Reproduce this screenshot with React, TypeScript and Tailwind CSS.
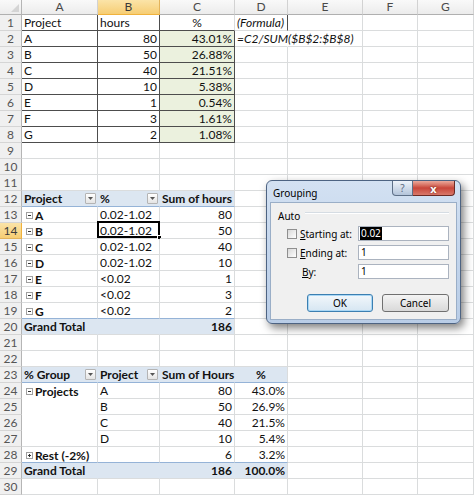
import React from 'react';

type Cell = {
  t?: React.ReactNode;
  a?: 'l' | 'r' | 'c';
  bold?: boolean;
  it?: boolean;
  bg?: string;
  r?: string;
  b?: string;
  extra?: React.ReactNode;
};

const GR = 'border-r-[#dadcdd]';
const GB = 'border-b-[#dadcdd]';
const DR = 'border-r-[#4d4d4d]';
const DB = 'border-b-[#4d4d4d]';
const PB = 'border-b-[#95b3d7]';
const TR = 'border-r-transparent';
const TB = 'border-b-transparent';
const BLUE = 'bg-[#dce6f1]';
const GREEN = 'bg-[#ebf1de]';

function Dropdown() {
  return (
    <span className="absolute right-[1px] top-[2px] w-[11px] h-[11px] border border-[#b4b4b4] rounded-[1px] bg-linear-to-b from-white to-[#e4e4e4] flex items-center justify-center">
      <svg width="5" height="3" viewBox="0 0 5 3">
        <path d="M0 0h5L2.5 3z" fill="#555" />
      </svg>
    </span>
  );
}

function Expander({ plus, label }: { plus?: boolean; label: string }) {
  return (
    <span className="inline-flex items-center">
      <span className="relative inline-block w-[7px] h-[7px] border border-[#a0a0a0] bg-white ml-[2px] mr-[2px]">
        <span className="absolute left-[1px] top-[2px] w-[3px] h-px bg-[#333]" />
        {plus && <span className="absolute left-[2px] top-[1px] w-px h-[3px] bg-[#333]" />}
      </span>
      <span className="font-bold">{label}</span>
    </span>
  );
}

function Selection() {
  return (
    <span className="absolute left-[-1px] top-[-2px] w-[calc(100%+2px)] h-[calc(100%+2px)] border-2 border-black pointer-events-none">
      <span className="absolute right-[-4px] bottom-[-4px] w-[5px] h-[5px] bg-black border border-white" />
    </span>
  );
}

const rows: Cell[][] = Array.from({ length: 30 }, () => Array.from({ length: 7 }, () => ({} as Cell)));
const set = (r: number, c: number, v: Cell) => {
  rows[r - 1][c] = { ...rows[r - 1][c], ...v };
};

// Source table
set(1, 0, { t: 'Project', r: DR, b: DB });
set(1, 1, { t: 'hours', r: DR, b: DB });
set(1, 2, { t: '%', a: 'c', b: DB });
set(1, 3, { t: '(Formula)', it: true, r: DR });
const src: [string, string, string][] = [
  ['A', '80', '43.01%'],
  ['B', '50', '26.88%'],
  ['C', '40', '21.51%'],
  ['D', '10', '5.38%'],
  ['E', '1', '0.54%'],
  ['F', '3', '1.61%'],
  ['G', '2', '1.08%'],
];
src.forEach(([p, h, pct], i) => {
  const r = i + 2;
  set(r, 0, { t: p, r: DR, b: DB });
  set(r, 1, { t: h, a: 'r', r: DR, b: DB });
  set(r, 2, { t: pct, a: 'r', bg: GREEN, r: DR, b: DB });
});
set(2, 3, { t: '=C2/SUM($B$2:$B$8)', it: true, r: TR });

// Pivot 1
set(12, 0, { t: 'Project', bold: true, bg: BLUE, r: TR, b: PB, extra: <Dropdown /> });
set(12, 1, { t: '%', bold: true, bg: BLUE, r: TR, b: PB, extra: <Dropdown /> });
set(12, 2, { t: 'Sum of hours', bold: true, bg: BLUE, b: PB });
const ranges = ['0.02-1.02', '0.02-1.02', '0.02-1.02', '0.02-1.02', '<0.02', '<0.02', '<0.02'];
src.forEach(([p, h], i) => {
  const r = i + 13;
  set(r, 0, { t: <Expander label={p} /> });
  set(r, 1, { t: ranges[i] });
  set(r, 2, { t: h, a: 'r' });
});
set(19, 0, { b: PB });
set(19, 1, { b: PB });
set(19, 2, { b: PB });
set(14, 1, { extra: <Selection /> });
set(20, 0, { t: 'Grand Total', bold: true, bg: BLUE, r: TR });
set(20, 1, { bg: BLUE, r: TR });
set(20, 2, { t: '186', bold: true, a: 'r', bg: BLUE });

// Pivot 2
set(23, 0, { t: '% Group', bold: true, bg: BLUE, r: TR, b: PB, extra: <Dropdown /> });
set(23, 1, { t: 'Project', bold: true, bg: BLUE, r: TR, b: PB, extra: <Dropdown /> });
set(23, 2, { t: 'Sum of Hours', bold: true, bg: BLUE, r: TR, b: PB });
set(23, 3, { t: '%', bold: true, a: 'c', bg: BLUE, b: PB });
set(24, 0, { t: <Expander label="Projects" />, b: TB });
set(25, 0, { b: TB });
set(26, 0, { b: TB });
const p2: [string, string, string][] = [
  ['A', '80', '43.0%'],
  ['B', '50', '26.9%'],
  ['C', '40', '21.5%'],
  ['D', '10', '5.4%'],
];
p2.forEach(([p, h, pct], i) => {
  const r = i + 24;
  set(r, 1, { t: p });
  set(r, 2, { t: h, a: 'r' });
  set(r, 3, { t: pct, a: 'r' });
});
set(28, 0, { t: <Expander plus label="Rest (-2%)" />, b: PB });
set(28, 1, { b: PB });
set(28, 2, { t: '6', a: 'r', b: PB });
set(28, 3, { t: '3.2%', a: 'r', b: PB });
set(29, 0, { t: 'Grand Total', bold: true, bg: BLUE, r: TR });
set(29, 1, { bg: BLUE, r: TR });
set(29, 2, { t: '186', bold: true, a: 'r', bg: BLUE, r: TR });
set(29, 3, { t: '100.0%', bold: true, a: 'r', bg: BLUE });

const COLS = ['A', 'B', 'C', 'D', 'E', 'F', 'G'];

function GroupingDialog() {
  return (
    <div className="absolute left-[266px] top-[180px] w-[195px] h-[144px] rounded-[6px] border border-[#4d6382] bg-linear-to-b from-[#d3e1f2] via-[#c3d5ec] to-[#b9cde7] shadow-[3px_4px_9px_rgba(0,0,0,0.5)] flex flex-col font-['Noto_Sans',sans-serif] text-black">
      <div className="h-[21px] flex items-start justify-between pl-[6px] pr-[5px]">
        <span className="pt-[5px] text-[10px] leading-[14px]">Grouping</span>
        <div className="flex">
          <div className="w-[21px] h-[15px] border border-t-0 border-[#5d6f87] rounded-bl-[4px] bg-linear-to-b from-[#eef3fa] to-[#b3c4da] flex items-center justify-center text-[10px] leading-none text-[#5a6a80]">
            ?
          </div>
          <div className="w-[42px] h-[15px] border border-t-0 border-l-0 border-[#6b2a24] rounded-br-[4px] bg-linear-to-b from-[#eaa99c] via-[#c8453a] to-[#d8786a] flex items-center justify-center text-white text-[11px] leading-none font-bold [text-shadow:0_0_2px_#5a1a14]">
            x
          </div>
        </div>
      </div>
      <div className="flex-1 mx-[3px] mb-[3px] bg-[#f0f0f0] border border-[#9aaec7] pl-[7px] pr-[7px] pt-[6px] text-[10px]">
        <div className="flex items-start h-[14px]">
          <span className="leading-[14px]">Auto</span>
          <div className="flex-1 mt-[3px] ml-[5px] h-[2px] border-t border-t-[#d5dce3] border-b border-b-white" />
        </div>
        <div className="mt-[3px] flex flex-col gap-[4px]">
          {[
            { cb: true, label: <><span className="underline">S</span>tarting at:</>, val: <span className="bg-black text-white px-[1px]">0.02</span> },
            { cb: true, label: <><span className="underline">E</span>nding at:</>, val: <span className="px-[1px]">1</span> },
            { cb: false, label: <><span className="underline">B</span>y:</>, val: <span className="px-[1px]">1</span> },
          ].map((row, i) => (
            <div key={i} className="flex items-center h-[15px]">
              <div className="w-[80px] flex items-center">
                {row.cb ? (
                  <>
                    <span className="ml-[9px] w-[10px] h-[10px] border border-[#8f8f8f] bg-linear-to-br from-[#d8d8d8] to-white" />
                    <span className="ml-[3px] leading-[14px]">{row.label}</span>
                  </>
                ) : (
                  <span className="ml-[24px] leading-[14px]">{row.label}</span>
                )}
              </div>
              <div className="w-[91px] h-[15px] border border-[#abb3bf] bg-white pl-[1px] leading-[13px] flex items-center">
                {row.val}
              </div>
            </div>
          ))}
        </div>
        <div className="mt-[15px] flex">
          <div className="ml-[29px] w-[66px] h-[18px] rounded-[3px] border border-[#3c7fb1] bg-linear-to-b from-[#f2f7fb] to-[#d6e6f2] shadow-[inset_0_0_0_1px_#a9d7f5] flex items-center justify-center leading-none">
            OK
          </div>
          <div className="ml-[9px] w-[67px] h-[18px] rounded-[3px] border border-[#707070] bg-linear-to-b from-[#f4f4f4] to-[#d9d9d9] flex items-center justify-center leading-none">
            Cancel
          </div>
        </div>
      </div>
    </div>
  );
}

export default function App() {
  return (
    <div className="relative w-[474px] h-[495px] overflow-hidden bg-white font-['Lato',sans-serif] text-[12px] text-[#111]">
      <div className="grid grid-cols-[22px_76px_62px_75px_53px_75px_55px_56px]">
        <div className="relative h-[15px] border-r border-b border-r-[#b5b5b5] border-b-[#b0b0b0] bg-linear-to-b from-[#f9f9f9] to-[#ececec]">
          <svg className="absolute right-[2px] bottom-[2px]" width="8" height="8" viewBox="0 0 8 8">
            <path d="M8 0V8H0z" fill="#d4d4d4" />
          </svg>
        </div>
        {COLS.map((c) =>
          c === 'B' ? (
            <div
              key={c}
              className="h-[15px] border-r border-b border-r-[#e3b35a] border-b-[#f0b23d] bg-linear-to-b from-[#fbe4a8] to-[#f6cd73] text-center leading-[14px] text-[#3a3a3a]"
            >
              {c}
            </div>
          ) : (
            <div
              key={c}
              className="h-[15px] border-r border-b border-r-[#d2d2d2] border-b-[#b0b0b0] bg-linear-to-b from-[#f9f9f9] to-[#ececec] text-center leading-[14px] text-[#4a4a4a]"
            >
              {c}
            </div>
          )
        )}
        {rows.map((row, ri) => {
          const rn = ri + 1;
          return (
            <React.Fragment key={rn}>
              {rn === 14 ? (
                <div className="h-4 border-r border-b border-r-[#f0b23d] border-b-[#e3b35a] bg-linear-to-b from-[#fbe4a8] to-[#f6cd73] text-center leading-[15px] text-[#3a3a3a]">
                  {rn}
                </div>
              ) : (
                <div className="h-4 border-r border-b border-r-[#b5b5b5] border-b-[#d5d5d5] bg-[#f0f0f0] text-center leading-[15px] text-[#555]">
                  {rn}
                </div>
              )}
              {row.map((c, ci) => {
                const align = c.a === 'r' ? 'text-right' : c.a === 'c' ? 'text-center' : 'text-left';
                return (
                  <div
                    key={ci}
                    className={`relative h-4 border-r border-b ${c.r ?? GR} ${c.b ?? GB} ${c.bg ?? ''} px-[2px] leading-[15px] whitespace-nowrap ${align} ${c.bold ? 'font-bold' : ''} ${c.it ? 'italic' : ''}`}
                  >
                    {c.t}
                    {c.extra}
                  </div>
                );
              })}
            </React.Fragment>
          );
        })}
      </div>
      <GroupingDialog />
    </div>
  );
}
